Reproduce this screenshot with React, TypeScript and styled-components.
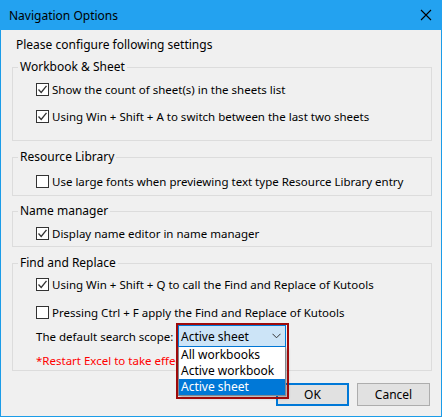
import React from 'react';
import styled, { createGlobalStyle } from 'styled-components';

const GlobalStyle = createGlobalStyle`
	html, body {
		margin: 0;
		padding: 0;
		background: #f0f0f0;
	}
	* {
		box-sizing: border-box;
	}
`;

const FONT = `'Noto Sans', 'Open Sans', 'Liberation Sans', sans-serif`;

const Window = styled.div`
	width: 442px;
	height: 417px;
	display: flex;
	flex-direction: column;
	background: #f0f0f0;
	border: 1px solid #1b9ce8;
	border-top: none;
	font-family: ${FONT};
	font-size: 11.5px;
	color: #000;
`;

const TitleBar = styled.div`
	height: 30px;
	margin: 0 -1px;
	background: #23a2f0;
	display: flex;
	align-items: center;
	justify-content: space-between;
	padding: 0 10px 0 9px;
`;

const Title = styled.span`
	font-size: 12px;
	color: #000;
`;

const Content = styled.div`
	flex: 1;
	display: flex;
	flex-direction: column;
	padding: 7px 9px 0 11px;
`;

const Intro = styled.div`
	height: 16px;
	line-height: 16px;
	padding-left: 4px;
	margin-bottom: 6px;
	font-size: 12px;
`;

const Group = styled.fieldset<{ $pb: number; $mb: number }>`
	margin: 0 0 ${(p) => p.$mb}px 0;
	padding: 0 0 ${(p) => p.$pb}px 0;
	border: 1px solid #dcdcdc;
	min-width: 0;
`;

const Legend = styled.legend`
	margin-left: 5px;
	padding: 0 2px;
	line-height: 16px;
	font-size: 12px;
`;

const Row = styled.div<{ $mt: number; $h?: number }>`
	display: flex;
	align-items: center;
	height: ${(p) => p.$h ?? 20}px;
	margin-top: ${(p) => p.$mt}px;
	padding-left: 23px;
`;

const Box = styled.span`
	width: 13px;
	height: 13px;
	flex: none;
	border: 1px solid #333;
	background: #fff;
	display: flex;
	align-items: center;
	justify-content: center;
	margin-right: 3px;
`;

const Label = styled.span`
	white-space: nowrap;
`;

const ScopeLabel = styled.span`
	width: 142px;
	white-space: nowrap;
`;

const Note = styled.span`
	color: #f00;
	white-space: nowrap;
`;

const ComboWrap = styled.div`
	position: relative;
`;

const Combo = styled.div`
	width: 108px;
	height: 22px;
	border: 1px solid #0078d7;
	background: #cce4f7;
	display: flex;
	align-items: center;
	justify-content: space-between;
	padding: 0 4px 0 2px;
	font-size: 12px;
`;

const List = styled.div`
	position: absolute;
	left: 0;
	top: 22px;
	width: 108px;
	background: #fff;
	border: 1px solid #828790;
	border-top: none;
	box-shadow: 2px 2px 3px rgba(0, 0, 0, 0.25);
	z-index: 2;
	font-size: 12px;
`;

const Item = styled.div<{ $active?: boolean }>`
	height: 16px;
	line-height: 16px;
	padding-left: 2px;
	white-space: nowrap;
	background: ${(p) => (p.$active ? '#0078d7' : 'transparent')};
	color: ${(p) => (p.$active ? '#fff' : '#000')};
`;

const Highlight = styled.div`
	position: absolute;
	left: -2px;
	top: -2px;
	width: 113px;
	height: 76px;
	border: 2px solid #9e0a0a;
	pointer-events: none;
	z-index: 3;
`;

const Buttons = styled.div`
	display: flex;
	justify-content: flex-end;
	gap: 8px;
	padding-right: 2px;
`;

const Button = styled.button<{ $default?: boolean }>`
	width: 73px;
	height: 23px;
	font-family: ${FONT};
	font-size: 12px;
	color: #000;
	background: #e1e1e1;
	border: ${(p) => (p.$default ? '2px solid #0078d7' : '1px solid #adadad')};
	padding: 0;
`;

const Check = () => (
	<svg width="11" height="11" viewBox="0 0 11 11">
		<path d="M1.5 5.5 L4.2 8.5 L9.5 1.8" fill="none" stroke="#333" strokeWidth="1.3" />
	</svg>
);

const CheckBox = ({ checked }: { checked?: boolean }) => <Box>{checked && <Check />}</Box>;

const Chevron = () => (
	<svg width="9" height="6" viewBox="0 0 9 6">
		<path d="M0.5 0.8 L4.5 4.8 L8.5 0.8" fill="none" stroke="#333" strokeWidth="1" />
	</svg>
);

const CloseIcon = () => (
	<svg width="12" height="12" viewBox="0 0 12 12">
		<path d="M1 1 L11 11 M11 1 L1 11" stroke="#000" strokeWidth="1.1" />
	</svg>
);

const App = () => (
	<>
		<GlobalStyle />
		<Window>
			<TitleBar>
				<Title>Navigation Options</Title>
				<CloseIcon />
			</TitleBar>
			<Content>
				<Intro>Please configure following settings</Intro>

				<Group $pb={14} $mb={8}>
					<Legend>Workbook &amp; Sheet</Legend>
					<Row $mt={4}>
						<CheckBox checked />
						<Label>Show the count of sheet(s) in the sheets list</Label>
					</Row>
					<Row $mt={7}>
						<CheckBox checked />
						<Label>Using Win + Shift + A to switch between the last two sheets</Label>
					</Row>
				</Group>

				<Group $pb={4} $mb={7}>
					<Legend>Resource Library</Legend>
					<Row $mt={6}>
						<CheckBox />
						<Label>Use large fonts when previewing text type Resource Library entry</Label>
					</Row>
				</Group>

				<Group $pb={3} $mb={8}>
					<Legend>Name manager</Legend>
					<Row $mt={4}>
						<CheckBox checked />
						<Label>Display name editor in name manager</Label>
					</Row>
				</Group>

				<Group $pb={0} $mb={12}>
					<Legend>Find and Replace</Legend>
					<Row $mt={3}>
						<CheckBox checked />
						<Label>Using Win + Shift + Q to call the Find and Replace of Kutools</Label>
					</Row>
					<Row $mt={8}>
						<CheckBox />
						<Label>Pressing Ctrl + F apply the Find and Replace of Kutools</Label>
					</Row>
					<Row $mt={3} $h={22}>
						<ScopeLabel>The default search scope:</ScopeLabel>
						<ComboWrap>
							<Combo>
								<span>Active sheet</span>
								<Chevron />
							</Combo>
							<List>
								<Item>All workbooks</Item>
								<Item>Active workbook</Item>
								<Item $active>Active sheet</Item>
							</List>
							<Highlight />
						</ComboWrap>
					</Row>
					<Row $mt={3}>
						<Note>*Restart Excel to take effect</Note>
					</Row>
				</Group>

				<Buttons>
					<Button $default>OK</Button>
					<Button>Cancel</Button>
				</Buttons>
			</Content>
		</Window>
	</>
);

export default App;
